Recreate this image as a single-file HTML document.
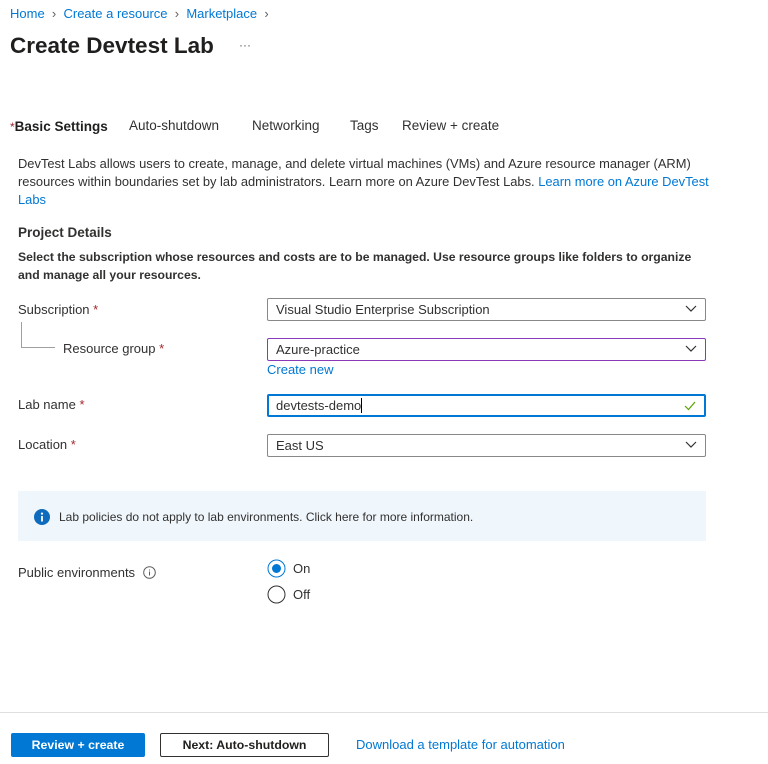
<!DOCTYPE html>
<html><head><style>
*{box-sizing:border-box;margin:0;padding:0}
body{width:768px;height:764px;background:#fff;font-family:"Liberation Sans",sans-serif;color:#323130;font-size:13px;position:relative;overflow:hidden}
.a{position:absolute;white-space:nowrap}
.l{color:#0078d4}
.st{color:#a4262c}
.dd{position:absolute;left:267px;width:439px;height:23px;border:1px solid #8a8886;border-radius:2px;padding:3px 8px;font-size:13px}
.dd svg{position:absolute;right:8px;top:6px}
</style></head><body>
<div class="a l" style="left:10px;top:6px;font-size:13px">Home <span style="color:#605e5c">&nbsp;›&nbsp;</span> Create a resource <span style="color:#605e5c">&nbsp;›&nbsp;</span> Marketplace <span style="color:#605e5c">&nbsp;›</span></div>
<div class="a" style="left:10px;top:33px;font-size:22.5px;font-weight:bold;color:#201f1e">Create Devtest Lab</div>
<div class="a" style="left:239px;top:38px;font-size:12px;color:#605e5c">···</div>

<div class="a" style="left:10px;top:118px;font-size:14px"><span class="st" style="font-size:12px">*</span><span style="color:#201f1e;font-weight:bold;font-size:13.5px">Basic Settings</span></div>
<div class="a" style="left:129px;top:118px;font-size:13.5px">Auto-shutdown</div>
<div class="a" style="left:252px;top:118px;font-size:13.5px">Networking</div>
<div class="a" style="left:350px;top:118px;font-size:13.5px">Tags</div>
<div class="a" style="left:402px;top:118px;font-size:13.5px">Review + create</div>

<div class="a" style="left:18px;top:155px;line-height:18px;width:695px;white-space:normal;font-size:12.9px">DevTest Labs allows users to create, manage, and delete virtual machines (VMs) and Azure resource manager (ARM) resources within boundaries set by lab administrators. Learn more on Azure DevTest Labs. <span class="l">Learn more on Azure DevTest Labs</span></div>

<div class="a" style="left:18px;top:225px;font-weight:bold;font-size:13.5px">Project Details</div>
<div class="a" style="left:18px;top:248px;line-height:18px;width:690px;white-space:normal;font-weight:bold;font-size:12.2px">Select the subscription whose resources and costs are to be managed. Use resource groups like folders to organize and manage all your resources.</div>

<div class="a" style="left:18px;top:302px">Subscription <span class="st">*</span></div>
<div class="a" style="left:21px;top:322px;width:34px;height:26px;border-left:1px solid #a19f9d;border-bottom:1px solid #a19f9d"></div>
<div class="a" style="left:63px;top:341px">Resource group <span class="st">*</span></div>
<div class="a" style="left:18px;top:397px">Lab name <span class="st">*</span></div>
<div class="a" style="left:18px;top:437px">Location <span class="st">*</span></div>

<div class="dd" style="top:298px">Visual Studio Enterprise Subscription<svg width="12" height="8"><path d="M1 1l5 5 5-5" stroke="#323130" fill="none" stroke-width="1.2"/></svg></div>
<div class="dd" style="top:338px;border-color:#8a3ab9">Azure-practice<svg width="12" height="8"><path d="M1 1l5 5 5-5" stroke="#323130" fill="none" stroke-width="1.2"/></svg></div>
<div class="a l" style="left:267px;top:362px">Create new</div>
<div class="dd" style="top:394px;border:2px solid #0078d4;padding:2px 7px">devtests-demo<span style="border-left:1px solid #000;margin-left:0">&#8203;</span><svg width="12" height="10" style="top:5px"><path d="M1 5l3.5 3.5L11 1" stroke="#57a300" fill="none" stroke-width="1.2"/></svg></div>
<div class="dd" style="top:434px">East US<svg width="12" height="8"><path d="M1 1l5 5 5-5" stroke="#323130" fill="none" stroke-width="1.2"/></svg></div>

<div class="a" style="left:18px;top:491px;width:688px;height:50px;background:#eff6fc"></div>
<svg class="a" style="left:34px;top:509px" width="16" height="16"><circle cx="8" cy="8" r="8" fill="#0f6cbd"/><rect x="7.1" y="7" width="1.8" height="5.5" fill="#fff"/><circle cx="8" cy="4.6" r="1.1" fill="#fff"/></svg>
<div class="a" style="left:59px;top:510px;font-size:12px">Lab policies do not apply to lab environments. Click here for more information.</div>

<div class="a" style="left:18px;top:565px">Public environments</div>
<svg class="a" style="left:143px;top:566px" width="13" height="13"><circle cx="6.5" cy="6.5" r="5.8" fill="none" stroke="#605e5c"/><rect x="6" y="5.5" width="1" height="4" fill="#605e5c"/><rect x="6" y="3.5" width="1" height="1" fill="#605e5c"/></svg>
<svg class="a" style="left:267px;top:559px" width="19" height="19"><circle cx="9.5" cy="9.5" r="8.5" fill="none" stroke="#0078d4"/><circle cx="9.5" cy="9.5" r="4.5" fill="#0078d4"/></svg>
<div class="a" style="left:293px;top:561px">On</div>
<svg class="a" style="left:267px;top:585px" width="19" height="19"><circle cx="9.5" cy="9.5" r="8.5" fill="none" stroke="#323130"/></svg>
<div class="a" style="left:293px;top:587px">Off</div>

<div class="a" style="left:0;top:712px;width:768px;height:1px;background:#e1dfdd"></div>
<div class="a" style="left:11px;top:733px;width:134px;height:24px;background:#0078d4;color:#fff;font-weight:bold;font-size:12.3px;text-align:center;line-height:24px;border-radius:2px">Review + create</div>
<div class="a" style="left:160px;top:733px;width:169px;height:24px;border:1px solid #323130;color:#201f1e;font-weight:bold;font-size:12.3px;text-align:center;line-height:22px;border-radius:2px">Next: Auto-shutdown</div>
<div class="a l" style="left:356px;top:737px">Download a template for automation</div>
</body></html>
